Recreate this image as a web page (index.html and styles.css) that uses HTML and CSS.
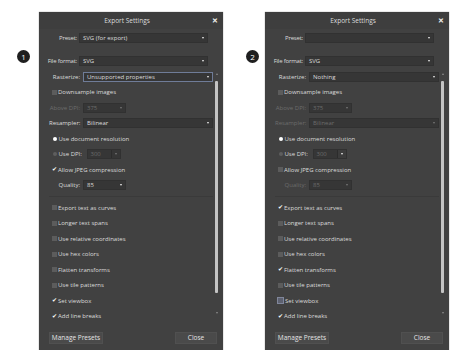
FILE: index.html
```html
<!DOCTYPE html>
<html lang="en">
<head>
<meta charset="UTF-8">
<title>Export Settings</title>
<link rel="stylesheet" href="styles.css">
</head>
<body>
<div class="page">
  <div class="panel">
    <div class="badge">1</div>
    <div class="dialog">
      <div class="title-bar"><span></span><span class="title">Export Settings</span><span class="close">&#x2715;</span></div>
      <div class="top">
        <div class="row"><span class="lbl top-lbl">Preset:</span><div class="select wide-top"><span>SVG (for export)</span><i class="caret"></i></div></div>
        <div class="row gap-row"><span class="lbl top-lbl">File format:</span><div class="select wide-top"><span>SVG</span><i class="caret"></i></div></div>
      </div>
      <div class="scroll">
        <div class="scroll-content">
          <div class="row"><span class="lbl">Rasterize:</span><div class="select wide focus"><span>Unsupported properties</span><i class="caret"></i></div></div>
          <div class="row"><span class="box"></span><span>Downsample images</span></div>
          <div class="row"><span class="lbl off">Above DPI:</span><div class="select small off"><span>375</span><i class="caret dim"></i></div></div>
          <div class="row"><span class="lbl">Resampler:</span><div class="select wide"><span>Bilinear</span><i class="caret"></i></div></div>
          <div class="row"><span class="radio on"></span><span>Use document resolution</span></div>
          <div class="row"><span class="radio"></span><span class="dpi-lbl">Use DPI:</span><div class="select spin off"><span>300</span><b class="spin-btn"><i class="caret dim"></i></b></div></div>
          <div class="row"><span class="box checked">&#x2714;</span><span>Allow JPEG compression</span></div>
          <div class="row"><span class="lbl">Quality:</span><div class="select small"><span>85</span><i class="caret"></i></div></div>
          <div class="sep"></div>
          <div class="row"><span class="box"></span><span>Export text as curves</span></div>
          <div class="row"><span class="box"></span><span>Longer text spans</span></div>
          <div class="row"><span class="box"></span><span>Use relative coordinates</span></div>
          <div class="row"><span class="box"></span><span>Use hex colors</span></div>
          <div class="row"><span class="box"></span><span>Flatten transforms</span></div>
          <div class="row"><span class="box"></span><span>Use tile patterns</span></div>
          <div class="row"><span class="box checked">&#x2714;</span><span>Set viewbox</span></div>
          <div class="row"><span class="box checked">&#x2714;</span><span>Add line breaks</span></div>
        </div>
        <div class="scrollbar">
          <i class="arrow-up"></i>
          <div class="thumb"></div>
          <i class="arrow-down"></i>
        </div>
      </div>
      <div class="buttons">
        <button class="btn manage">Manage Presets</button>
        <button class="btn close-btn">Close</button>
      </div>
    </div>
  </div>

  <div class="panel">
    <div class="badge">2</div>
    <div class="dialog">
      <div class="title-bar"><span></span><span class="title">Export Settings</span><span class="close">&#x2715;</span></div>
      <div class="top">
        <div class="row"><span class="lbl top-lbl">Preset:</span><div class="select wide-top"><span></span><i class="caret"></i></div></div>
        <div class="row gap-row"><span class="lbl top-lbl">File format:</span><div class="select wide-top"><span>SVG</span><i class="caret"></i></div></div>
      </div>
      <div class="scroll">
        <div class="scroll-content">
          <div class="row"><span class="lbl">Rasterize:</span><div class="select wide"><span>Nothing</span><i class="caret"></i></div></div>
          <div class="row"><span class="box"></span><span>Downsample images</span></div>
          <div class="row"><span class="lbl off">Above DPI:</span><div class="select small off"><span>375</span><i class="caret dim"></i></div></div>
          <div class="row"><span class="lbl off">Resampler:</span><div class="select wide off"><span>Bilinear</span><i class="caret dim"></i></div></div>
          <div class="row"><span class="radio on"></span><span>Use document resolution</span></div>
          <div class="row"><span class="radio"></span><span class="dpi-lbl">Use DPI:</span><div class="select spin off"><span>300</span><b class="spin-btn active"><i class="caret"></i></b></div></div>
          <div class="row"><span class="box"></span><span>Allow JPEG compression</span></div>
          <div class="row"><span class="lbl off">Quality:</span><div class="select small off"><span>85</span><i class="caret dim"></i></div></div>
          <div class="sep"></div>
          <div class="row"><span class="box checked">&#x2714;</span><span>Export text as curves</span></div>
          <div class="row"><span class="box"></span><span>Longer text spans</span></div>
          <div class="row"><span class="box"></span><span>Use relative coordinates</span></div>
          <div class="row"><span class="box"></span><span>Use hex colors</span></div>
          <div class="row"><span class="box checked">&#x2714;</span><span>Flatten transforms</span></div>
          <div class="row"><span class="box"></span><span>Use tile patterns</span></div>
          <div class="row"><span class="box hover"></span><span>Set viewbox</span></div>
          <div class="row"><span class="box checked">&#x2714;</span><span>Add line breaks</span></div>
        </div>
        <div class="scrollbar">
          <i class="arrow-up"></i>
          <div class="thumb"></div>
          <i class="arrow-down"></i>
        </div>
      </div>
      <div class="buttons">
        <button class="btn manage">Manage Presets</button>
        <button class="btn close-btn">Close</button>
      </div>
    </div>
  </div>
</div>
</body>
</html>
```

FILE: styles.css
```css
body {
    margin: 0;
    background-color: #ffffff;
    font-family: 'Open Sans', 'Noto Sans', sans-serif;
    font-size: 6px;
    color: #dcdcdc;
}
.page {
    display: flex;
    padding: 12px 0 0 17px;
}
.panel {
    display: flex;
    align-items: flex-start;
    gap: 9px;
}
.panel + .panel {
    margin-left: 23px;
    gap: 6px;
}
.badge {
    width: 13px;
    height: 13px;
    margin-top: 38px;
    border-radius: 50%;
    background-color: #1f1f1f;
    color: #ffffff;
    font-size: 8px;
    display: flex;
    align-items: center;
    justify-content: center;
}
.dialog {
    width: 184px;
    height: 338px;
    background-color: #414141;
    display: flex;
    flex-direction: column;
    box-shadow: 0 0 1px rgba(0, 0, 0, 0.5);
}
.title-bar {
    height: 17px;
    display: grid;
    grid-template-columns: 1fr auto 1fr;
    align-items: center;
    background-color: #3e3e3e;
}
.title {
    margin-right: 8px;
    font-size: 6.5px;
}
.close {
    justify-self: end;
    margin-right: 5px;
    font-size: 7px;
    font-weight: bold;
    color: #f0f0f0;
}
.top {
    padding-top: 1.25px;
}
.row {
    height: 15.5px;
    display: flex;
    align-items: center;
    white-space: nowrap;
}
.gap-row {
    margin-top: 7.5px;
}
.lbl {
    width: 31px;
    margin-right: 3px;
    text-align: right;
}
.top-lbl {
    width: 38px;
    margin-right: 2px;
    letter-spacing: -0.2px;
}
.off {
    color: #6c6c6c;
}
.select {
    height: 10px;
    box-sizing: border-box;
    padding-left: 3px;
    background-color: #363636;
    border: 1px solid #313131;
    display: flex;
    align-items: center;
    justify-content: space-between;
}
.wide-top {
    width: 129px;
}
.wide {
    width: 130px;
}
.small {
    width: 43px;
}
.focus {
    border-color: #6f7c98;
}
.caret {
    width: 0;
    height: 0;
    margin-right: 3px;
    border-left: 1.5px solid transparent;
    border-right: 1.5px solid transparent;
    border-top: 2px solid #f0f0f0;
}
.caret.dim {
    border-top-color: #777777;
}
.spin {
    width: 34px;
    margin-left: 6px;
    padding-right: 0;
}
.spin-btn {
    height: 100%;
    width: 8px;
    border-left: 1px solid #2c2c2c;
    display: flex;
    align-items: center;
    justify-content: center;
}
.spin-btn .caret {
    margin-right: 0;
}
.spin-btn.active {
    background-color: #3c3c3c;
}
.dpi-lbl {
    width: 22px;
}
.scroll {
    height: 255px;
    display: flex;
}
.scroll-content {
    flex: 1;
    padding-left: 10px;
}
.box {
    width: 5px;
    height: 5px;
    margin: 0 1px 0 3px;
    background-color: #5c5c5c;
    font-size: 5px;
    line-height: 5px;
    text-align: center;
    color: #ffffff;
}
.box.checked {
    background-color: transparent;
    font-size: 6px;
}
.box.hover {
    width: 7px;
    height: 7px;
    margin: 0 1px 0 2px;
    box-sizing: border-box;
    background-color: #5d6170;
    border: 1px solid #80869a;
}
.radio {
    width: 4px;
    height: 4px;
    margin: 0 2px 0 3.5px;
    border-radius: 50%;
    background-color: #5e5e5e;
}
.radio.on {
    background-color: #ffffff;
}
.sep {
    height: 7px;
    display: flex;
    align-items: center;
}
.sep::before {
    content: "";
    flex: 1;
    height: 1px;
    background-color: #3a3a3a;
}
.scrollbar {
    width: 7px;
    margin-right: 3px;
    display: flex;
    flex-direction: column;
    align-items: center;
    padding-top: 4px;
}
.arrow-up,
.arrow-down {
    width: 0;
    height: 0;
    border-left: 1.5px solid transparent;
    border-right: 1.5px solid transparent;
}
.arrow-up {
    border-bottom: 2px solid #8a8a8a;
}
.arrow-down {
    border-top: 2px solid #8a8a8a;
}
.thumb {
    width: 3px;
    height: 212px;
    margin: 6px 0 19px;
    border-radius: 1px;
    background-color: #c4c4c4;
}
.buttons {
    flex: 1;
    display: flex;
    align-items: center;
    justify-content: space-between;
    padding: 2px 6px 0 10px;
}
.btn {
    height: 12px;
    padding: 0;
    background-color: #4a4a4a;
    border: 1px solid #505050;
    color: #e4e4e4;
    font-family: inherit;
    font-size: 6.5px;
}
.manage {
    width: 54px;
}
.close-btn {
    width: 42px;
}
```
